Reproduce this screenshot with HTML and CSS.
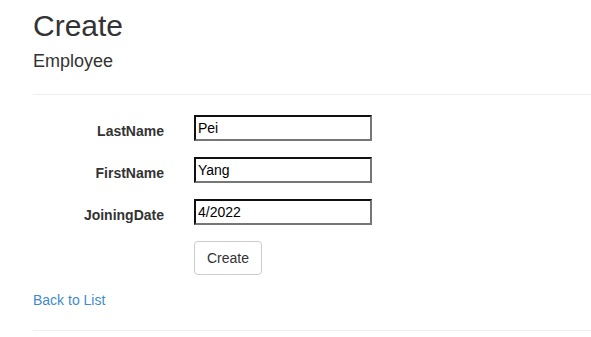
FILE: index.html
```html
<!DOCTYPE html>
<html lang="en">
<head>
  <meta charset="UTF-8">
  <meta name="viewport" content="width=device-width, initial-scale=1.0">
  <title>Create - Employee</title>
  <link rel="stylesheet" href="styles.css">
</head>
<body>
  <div class="body-content">
    <h2 class="page-title">Create</h2>

    <form class="form-horizontal">
      <h4 class="entity-title">Employee</h4>
      <hr>

      <div class="form-group">
        <label class="control-label" for="LastName">LastName</label>
        <div class="field">
          <input type="text" id="LastName" value="Pei">
        </div>
      </div>

      <div class="form-group">
        <label class="control-label" for="FirstName">FirstName</label>
        <div class="field">
          <input type="text" id="FirstName" value="Yang">
        </div>
      </div>

      <div class="form-group">
        <label class="control-label" for="JoiningDate">JoiningDate</label>
        <div class="field">
          <input type="text" id="JoiningDate" value="4/2022">
        </div>
      </div>

      <div class="form-group">
        <div class="field offset">
          <button type="submit" class="btn btn-default">Create</button>
        </div>
      </div>
    </form>

    <div class="back-link">
      <a href="#">Back to List</a>
    </div>

    <hr class="footer-rule">
  </div>
</body>
</html>
```

FILE: styles.css
```css
body {
  margin: 0;
  font-family: "Liberation Sans", Arial, sans-serif;
  font-size: 14px;
  line-height: 1.42857;
  color: #333;
  background: #fff;
}

.body-content {
  padding-left: 33px;
}

.page-title {
  margin: 9px 0 0;
  font-size: 30px;
  line-height: 33px;
  font-weight: 500;
}

.entity-title {
  margin: 9px 0 0;
  font-size: 18px;
  line-height: 20px;
  font-weight: 500;
}

hr {
  margin: 23px 0 20px;
  border: 0;
  border-top: 1px solid #eee;
}

.form-group {
  display: flex;
  margin-bottom: 15px;
}

.control-label {
  width: 131px;
  padding-top: 7px;
  text-align: right;
  font-weight: bold;
}

.field {
  margin-left: 30px;
}

.field.offset {
  margin-left: 161px;
}

input {
  display: block;
  box-sizing: border-box;
  width: 178px;
  height: 26px;
  padding: 1px 2px;
  font-family: inherit;
  font-size: 14px;
  line-height: 20px;
  color: #000;
  border: 2px solid;
  border-color: #101010 #767676 #767676 #101010;
  background: #fff;
}

.btn {
  display: inline-block;
  padding: 6px 12px;
  font-family: inherit;
  font-size: 14px;
  line-height: 20px;
  border-radius: 4px;
  cursor: pointer;
}

.btn-default {
  color: #333;
  background: #fff;
  border: 1px solid #ccc;
}

.back-link {
  padding-top: 1px;
}

.back-link a {
  color: #428bca;
  text-decoration: none;
}

.footer-rule {
  margin: 19px 0 0;
}
```
